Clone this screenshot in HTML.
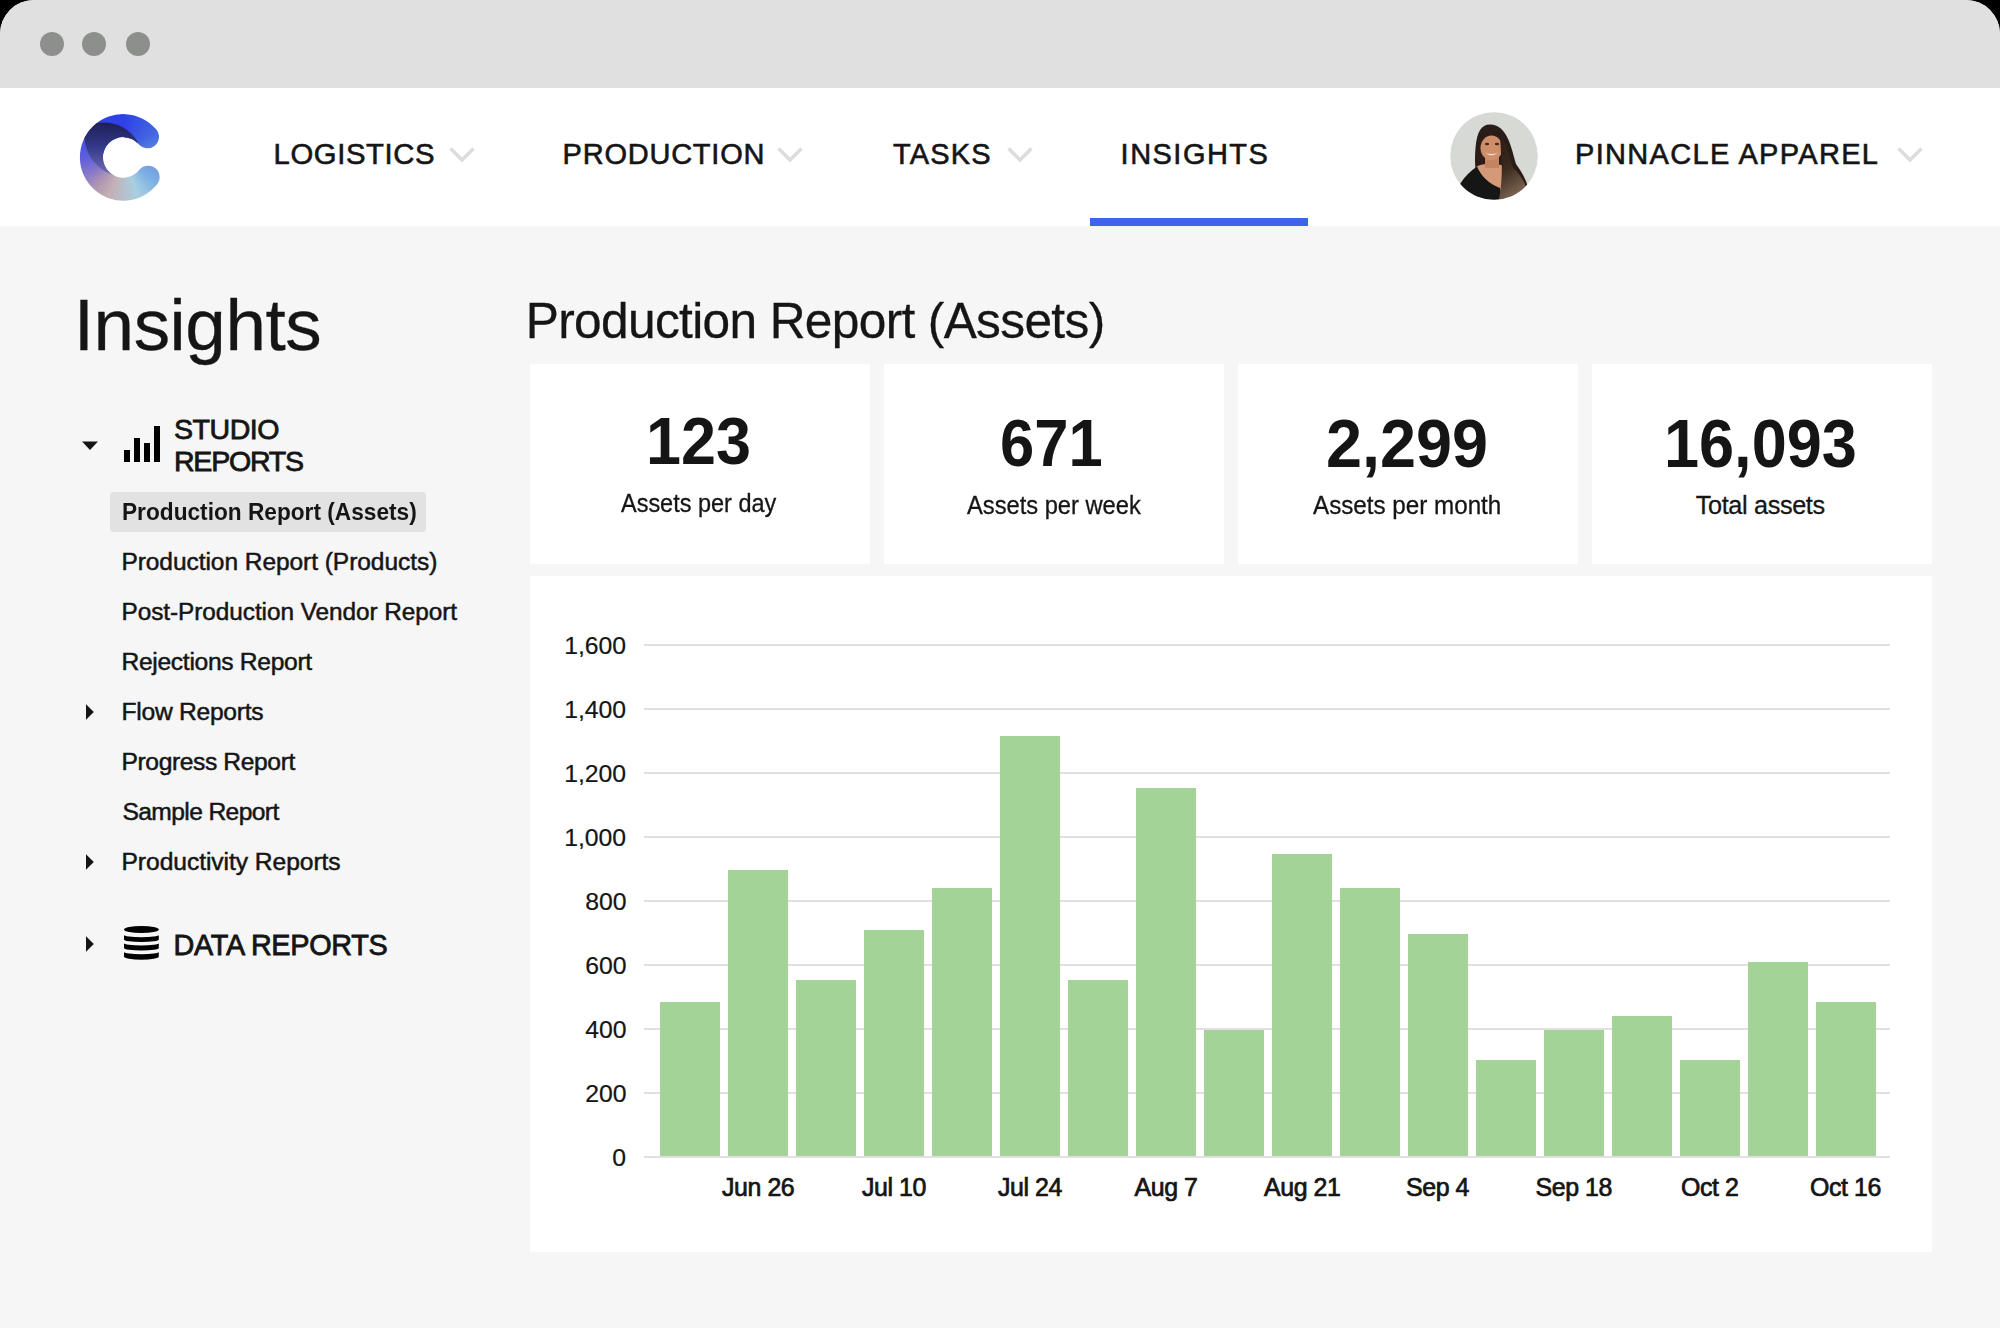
<!DOCTYPE html>
<html><head><meta charset="utf-8">
<style>
html,body{margin:0;padding:0;background:#000;width:2000px;height:1328px;overflow:hidden;}
body{font-family:"Liberation Sans",sans-serif;color:#151515;}
.win{position:absolute;left:0;top:0;width:2000px;height:1328px;background:#f6f6f6;border-radius:34px 34px 0 0;overflow:hidden;}
.tb{position:absolute;left:0;top:0;width:2000px;height:88px;background:#e0e0e0;}
.dot{position:absolute;top:32px;width:24px;height:24px;border-radius:50%;background:#8d8f8d;}
.nav{position:absolute;left:0;top:88px;width:2000px;height:138px;background:#fff;}
.t{position:absolute;white-space:nowrap;line-height:1;}
.abs{position:absolute;}
.uline{position:absolute;left:1090px;top:218px;width:218px;height:8px;background:#3a67e8;}
.card{position:absolute;background:#fff;}
.grid{position:absolute;left:644px;width:1246px;height:2px;background:#e0e0e0;}
.bar{position:absolute;width:60px;background:#a3d396;}
</style></head>
<body>
<div class="win">
  <div class="tb">
    <div class="dot" style="left:40px"></div>
    <div class="dot" style="left:82px"></div>
    <div class="dot" style="left:126px"></div>
  </div>
  <div class="nav"></div>
  <div class="abs" style="left:0;top:0;width:200px;height:226px;clip-path:path('M156.37,129.57 A43.3,43.3 0 1 0 157.32,184.06 A11.5,11.5 0 0 0 139.2,169.9 A20.3,20.3 0 1 1 138.75,144.35 A11.5,11.5 0 0 0 156.37,129.57 Z');background:conic-gradient(from 0deg at 123.2px 157.4px, #2e40e8 0deg, #4266e0 50deg, #6a90e2 90deg, #7cb0e4 128deg, #a8cfe2 158deg, #c4b0b4 200deg, #ac94b2 225deg, #8c7cc6 242deg, #5c5cdc 272deg, #3444e4 310deg, #2e40e8 360deg)"></div>
  <svg class="abs" style="left:0;top:0" width="200" height="226" viewBox="0 0 200 226">
    <defs>
      <clipPath id="cshape"><path d="M156.37,129.57 A43.3,43.3 0 1 0 157.32,184.06 A11.5,11.5 0 0 0 139.2,169.9 A20.3,20.3 0 1 1 138.75,144.35 A11.5,11.5 0 0 0 156.37,129.57 Z"/></clipPath>
      <linearGradient id="lgd" gradientUnits="userSpaceOnUse" x1="0" y1="122" x2="0" y2="178">
        <stop offset="0" stop-color="#1f1f55"/>
        <stop offset="0.45" stop-color="#34398a"/>
        <stop offset="0.75" stop-color="#5a5aa6"/>
        <stop offset="1" stop-color="#7a74aa"/>
      </linearGradient>
    </defs>
    <g clip-path="url(#cshape)">
      <path d="M96,123.2 C112,120.5 128,126 138,142 L123,157 L114.3,175.4 A41.5,41.5 0 0 1 84.6,139 L70,125 L90,110 Z" fill="url(#lgd)"/>
    </g>
  </svg>
  <div class="t" style="left:273.6px;top:139px;color:#151515;font-size:29.28px;letter-spacing:0.600px;-webkit-text-stroke:0.6px currentColor;">LOGISTICS</div>
  <div class="t" style="left:562.6px;top:140px;color:#151515;font-size:28.99px;letter-spacing:0.778px;-webkit-text-stroke:0.6px currentColor;">PRODUCTION</div>
  <div class="t" style="left:893px;top:140px;color:#151515;font-size:28.99px;letter-spacing:1.150px;-webkit-text-stroke:0.6px currentColor;">TASKS</div>
  <div class="t" style="left:1120.6px;top:140px;color:#151515;font-size:28.99px;letter-spacing:1.486px;-webkit-text-stroke:0.6px currentColor;">INSIGHTS</div>
  <div class="t" style="left:1575px;top:140px;color:#151515;font-size:28.99px;letter-spacing:1.333px;-webkit-text-stroke:0.6px currentColor;">PINNACLE APPAREL</div>
  <svg class="abs" style="left:448px;top:146px" width="28" height="18" viewBox="0 0 28 18"><path d="M2.5 2.5 L14 14 L25.5 2.5" fill="none" stroke="#dcdcdc" stroke-width="3.4"/></svg>
  <svg class="abs" style="left:776px;top:146px" width="28" height="18" viewBox="0 0 28 18"><path d="M2.5 2.5 L14 14 L25.5 2.5" fill="none" stroke="#dcdcdc" stroke-width="3.4"/></svg>
  <svg class="abs" style="left:1006px;top:146px" width="28" height="18" viewBox="0 0 28 18"><path d="M2.5 2.5 L14 14 L25.5 2.5" fill="none" stroke="#dcdcdc" stroke-width="3.4"/></svg>
  <svg class="abs" style="left:1896px;top:146px" width="28" height="18" viewBox="0 0 28 18"><path d="M2.5 2.5 L14 14 L25.5 2.5" fill="none" stroke="#dcdcdc" stroke-width="3.4"/></svg>
  <div class="uline"></div>
  <svg class="abs" style="left:1450px;top:112px" width="88" height="88" viewBox="0 0 88 88">
    <defs>
      <clipPath id="av"><circle cx="44" cy="44" r="43.8"/></clipPath>
      <linearGradient id="hairg" x1="0" y1="0" x2="0.3" y2="1">
        <stop offset="0" stop-color="#2a1c16"/>
        <stop offset="0.55" stop-color="#3a2a20"/>
        <stop offset="1" stop-color="#7a6250"/>
      </linearGradient>
      <filter id="soft" x="-10%" y="-10%" width="120%" height="120%"><feGaussianBlur stdDeviation="0.6"/></filter>
    </defs>
    <g clip-path="url(#av)">
      <rect width="88" height="88" fill="#d6d9d4"/>
      <g filter="url(#soft)">
      <path d="M40,12.5 C31,12.5 27,20 25.5,36 C24.5,48 25,58 27,66 L22,88 L80,88 C79,74 75,64 66,52 C61,34 57,13 40,12.5 Z" fill="#2c1e17"/>
      <path d="M26,55 C32,51 46,51 54,54 L58,88 L30,88 Z" fill="#d49a78"/>
      <rect x="35" y="42" width="14" height="14" fill="#c48462"/>
      <ellipse cx="41.5" cy="36" rx="11" ry="12.5" fill="#cf8e6a"/>
      <ellipse cx="37" cy="32" rx="2.2" ry="1.2" fill="#4a2a1e"/>
      <ellipse cx="47" cy="32" rx="2.2" ry="1.2" fill="#4a2a1e"/>
      <path d="M35,40.5 Q41.5,46 48,40.5 Q41.5,43.5 35,40.5 Z" fill="#f2e4dc"/>
      <path d="M4,88 C6,76 14,63 27,54.5 C31,64 39,72 50,76 L52,88 Z" fill="#151515"/>
      <path d="M50,22 C57,32 60,46 63,56 C72,64 78,74 78,88 L49,88 C51,76 53,60 51,42 Z" fill="url(#hairg)"/>
      </g>
    </g>
  </svg>
  <div class="t" style="left:73.8px;top:289px;color:#151515;font-size:72.83px;letter-spacing:-0.450px;-webkit-text-stroke:0.3px currentColor;">Insights</div>
  <svg class="abs" style="left:70px;top:420px" width="100" height="50" viewBox="70 420 100 50">
    <polygon points="82,441.5 98,441.5 90,450" fill="#151515"/>
    <rect x="124" y="450" width="6" height="12" fill="#000"/>
    <rect x="134" y="438" width="6" height="24" fill="#000"/>
    <rect x="144" y="443" width="6" height="19" fill="#000"/>
    <rect x="154" y="426" width="6" height="36" fill="#000"/>
  </svg>
  <div class="t" style="left:174.1px;top:414.9px;color:#151515;font-size:28.55px;letter-spacing:-0.520px;-webkit-text-stroke:0.8px currentColor;">STUDIO</div>
  <div class="t" style="left:174px;top:447px;color:#151515;font-size:28.55px;letter-spacing:-1.250px;-webkit-text-stroke:0.8px currentColor;">REPORTS</div>
  <div class="abs" style="left:110px;top:492px;width:316px;height:40px;background:#e2e2e2;border-radius:4px"></div>
  <div class="t" style="left:121.6px;top:500.2px;color:#151515;font-size:24.78px;letter-spacing:0.000px;font-weight:bold;transform:scaleX(0.9154);transform-origin:0 0;">Production Report (Assets)</div>
  <div class="t" style="left:121.4px;top:550px;color:#151515;font-size:24.49px;letter-spacing:-0.044px;-webkit-text-stroke:0.5px currentColor;">Production Report (Products)</div>
  <div class="t" style="left:121.5px;top:599.8px;color:#151515;font-size:24.35px;letter-spacing:-0.050px;-webkit-text-stroke:0.5px currentColor;">Post-Production Vendor Report</div>
  <div class="t" style="left:121.5px;top:650px;color:#151515;font-size:24.64px;letter-spacing:-0.319px;-webkit-text-stroke:0.5px currentColor;">Rejections Report</div>
  <div class="t" style="left:121.5px;top:700px;color:#151515;font-size:24.64px;letter-spacing:-0.273px;-webkit-text-stroke:0.5px currentColor;">Flow Reports</div>
  <div class="t" style="left:121.5px;top:750px;color:#151515;font-size:24.64px;letter-spacing:-0.393px;-webkit-text-stroke:0.5px currentColor;">Progress Report</div>
  <div class="t" style="left:122.5px;top:800px;color:#151515;font-size:24.64px;letter-spacing:-0.625px;-webkit-text-stroke:0.5px currentColor;">Sample Report</div>
  <div class="t" style="left:121.5px;top:850px;color:#151515;font-size:24.64px;letter-spacing:-0.063px;-webkit-text-stroke:0.5px currentColor;">Productivity Reports</div>
  <svg class="abs" style="left:0;top:0" width="200" height="1000" viewBox="0 0 200 1000">
    <polygon points="86,704.25 93.8,712.0 86,719.75" fill="#151515"/> <polygon points="86,854.25 93.8,862.0 86,869.75" fill="#151515"/> <polygon points="86,936.25 93.8,944.0 86,951.75" fill="#151515"/>
    <g fill="#000">
      <ellipse cx="141.4" cy="929.5" rx="17.4" ry="3.6"/>
      <path d="M124,935 A17.4,2.2 0 0 0 158.8,935 V939.5 A17.4,2.6 0 0 1 124,939.5 Z"/>
      <path d="M124,943.3 A17.4,2.2 0 0 0 158.8,943.3 V948 A17.4,2.6 0 0 1 124,948 Z"/>
      <path d="M124,952 A17.4,2.2 0 0 0 158.8,952 V956.5 A17.4,3.2 0 0 1 124,956.5 Z"/>
    </g>
  </svg>
  <div class="t" style="left:173.6px;top:930.7px;color:#151515;font-size:28.84px;letter-spacing:-0.345px;-webkit-text-stroke:0.8px currentColor;">DATA REPORTS</div>
  <div class="t" style="left:525.8px;top:297px;color:#151515;font-size:49.64px;letter-spacing:-0.654px;-webkit-text-stroke:0.3px currentColor;">Production Report (Assets)</div>
  <div class="card" style="left:530px;top:364px;width:340px;height:200px"></div>
  <div class="card" style="left:884px;top:364px;width:340px;height:200px"></div>
  <div class="card" style="left:1238px;top:364px;width:340px;height:200px"></div>
  <div class="card" style="left:1592px;top:364px;width:340px;height:200px"></div>
  <div class="t" style="left:645.8px;top:407.2px;color:#151515;font-size:67.54px;letter-spacing:0.000px;font-weight:bold;transform:scaleX(0.9321);transform-origin:0 0;">123</div>
  <div class="t" style="left:621px;top:491px;color:#151515;font-size:25.22px;letter-spacing:0.000px;-webkit-text-stroke:0.3px currentColor;transform:scaleX(0.9305);transform-origin:0 0;">Assets per day</div>
  <div class="t" style="left:1000px;top:410px;color:#151515;font-size:66.96px;letter-spacing:0.000px;font-weight:bold;transform:scaleX(0.9185);transform-origin:0 0;">671</div>
  <div class="t" style="left:967px;top:493.2px;color:#151515;font-size:25.22px;letter-spacing:0.000px;-webkit-text-stroke:0.3px currentColor;transform:scaleX(0.9395);transform-origin:0 0;">Assets per week</div>
  <div class="t" style="left:1325.6px;top:409.5px;color:#151515;font-size:67.97px;letter-spacing:0.000px;font-weight:bold;transform:scaleX(0.9533);transform-origin:0 0;">2,299</div>
  <div class="t" style="left:1313.4px;top:493.4px;color:#151515;font-size:25.22px;letter-spacing:0.000px;-webkit-text-stroke:0.3px currentColor;transform:scaleX(0.9595);transform-origin:0 0;">Assets per month</div>
  <div class="t" style="left:1664.4px;top:409.5px;color:#151515;font-size:67.97px;letter-spacing:0.000px;font-weight:bold;transform:scaleX(0.9274);transform-origin:0 0;">16,093</div>
  <div class="t" style="left:1695.7px;top:493.4px;color:#151515;font-size:25.22px;letter-spacing:-0.336px;-webkit-text-stroke:0.3px currentColor;">Total assets</div>
  <div class="card" style="left:530px;top:576px;width:1402px;height:676px"></div>
  <div class="grid" style="top:644px"></div>
  <div class="grid" style="top:708px"></div>
  <div class="grid" style="top:772px"></div>
  <div class="grid" style="top:836px"></div>
  <div class="grid" style="top:900px"></div>
  <div class="grid" style="top:964px"></div>
  <div class="grid" style="top:1028px"></div>
  <div class="grid" style="top:1092px"></div>
  <div class="bar" style="left:660px;top:1002px;height:154px"></div>
  <div class="bar" style="left:728px;top:870px;height:286px"></div>
  <div class="bar" style="left:796px;top:980px;height:176px"></div>
  <div class="bar" style="left:864px;top:930px;height:226px"></div>
  <div class="bar" style="left:932px;top:888px;height:268px"></div>
  <div class="bar" style="left:1000px;top:736px;height:420px"></div>
  <div class="bar" style="left:1068px;top:980px;height:176px"></div>
  <div class="bar" style="left:1136px;top:788px;height:368px"></div>
  <div class="bar" style="left:1204px;top:1030px;height:126px"></div>
  <div class="bar" style="left:1272px;top:854px;height:302px"></div>
  <div class="bar" style="left:1340px;top:888px;height:268px"></div>
  <div class="bar" style="left:1408px;top:934px;height:222px"></div>
  <div class="bar" style="left:1476px;top:1060px;height:96px"></div>
  <div class="bar" style="left:1544px;top:1030px;height:126px"></div>
  <div class="bar" style="left:1612px;top:1016px;height:140px"></div>
  <div class="bar" style="left:1680px;top:1060px;height:96px"></div>
  <div class="bar" style="left:1748px;top:962px;height:194px"></div>
  <div class="bar" style="left:1816px;top:1002px;height:154px"></div>
  <div class="grid" style="top:1156px"></div>
  <div class="t" style="left:564.2px;top:634.0px;font-size:24.78px;letter-spacing:-0.050px;-webkit-text-stroke:0.2px currentColor;">1,600</div>
  <div class="t" style="left:564.2px;top:698.0px;font-size:24.78px;letter-spacing:-0.050px;-webkit-text-stroke:0.2px currentColor;">1,400</div>
  <div class="t" style="left:564.2px;top:762.0px;font-size:24.78px;letter-spacing:-0.050px;-webkit-text-stroke:0.2px currentColor;">1,200</div>
  <div class="t" style="left:564.2px;top:826.0px;font-size:24.78px;letter-spacing:-0.050px;-webkit-text-stroke:0.2px currentColor;">1,000</div>
  <div class="t" style="left:585.2px;top:890.0px;font-size:24.78px;letter-spacing:-0.050px;-webkit-text-stroke:0.2px currentColor;">800</div>
  <div class="t" style="left:585.2px;top:954.0px;font-size:24.78px;letter-spacing:-0.050px;-webkit-text-stroke:0.2px currentColor;">600</div>
  <div class="t" style="left:585.2px;top:1018.0px;font-size:24.78px;letter-spacing:-0.050px;-webkit-text-stroke:0.2px currentColor;">400</div>
  <div class="t" style="left:585.2px;top:1082.0px;font-size:24.78px;letter-spacing:-0.050px;-webkit-text-stroke:0.2px currentColor;">200</div>
  <div class="t" style="left:612.2px;top:1146.0px;font-size:24.78px;letter-spacing:-0.050px;-webkit-text-stroke:0.2px currentColor;">0</div>
  <div class="t" style="left:722.0px;top:1174.8px;font-size:24.93px;letter-spacing:-0.420px;-webkit-text-stroke:0.7px currentColor;">Jun 26</div>
  <div class="t" style="left:862.0px;top:1174.8px;font-size:24.93px;letter-spacing:-0.420px;-webkit-text-stroke:0.7px currentColor;">Jul 10</div>
  <div class="t" style="left:998.0px;top:1174.8px;font-size:24.93px;letter-spacing:-0.420px;-webkit-text-stroke:0.7px currentColor;">Jul 24</div>
  <div class="t" style="left:1134.5px;top:1174.8px;font-size:24.93px;letter-spacing:-0.420px;-webkit-text-stroke:0.7px currentColor;">Aug 7</div>
  <div class="t" style="left:1264.0px;top:1174.8px;font-size:24.93px;letter-spacing:-0.420px;-webkit-text-stroke:0.7px currentColor;">Aug 21</div>
  <div class="t" style="left:1406.0px;top:1174.8px;font-size:24.93px;letter-spacing:-0.420px;-webkit-text-stroke:0.7px currentColor;">Sep 4</div>
  <div class="t" style="left:1535.5px;top:1174.8px;font-size:24.93px;letter-spacing:-0.420px;-webkit-text-stroke:0.7px currentColor;">Sep 18</div>
  <div class="t" style="left:1681.0px;top:1174.8px;font-size:24.93px;letter-spacing:-0.420px;-webkit-text-stroke:0.7px currentColor;">Oct 2</div>
  <div class="t" style="left:1810.0px;top:1174.8px;font-size:24.93px;letter-spacing:-0.420px;-webkit-text-stroke:0.7px currentColor;">Oct 16</div>
</div>
</body></html>
